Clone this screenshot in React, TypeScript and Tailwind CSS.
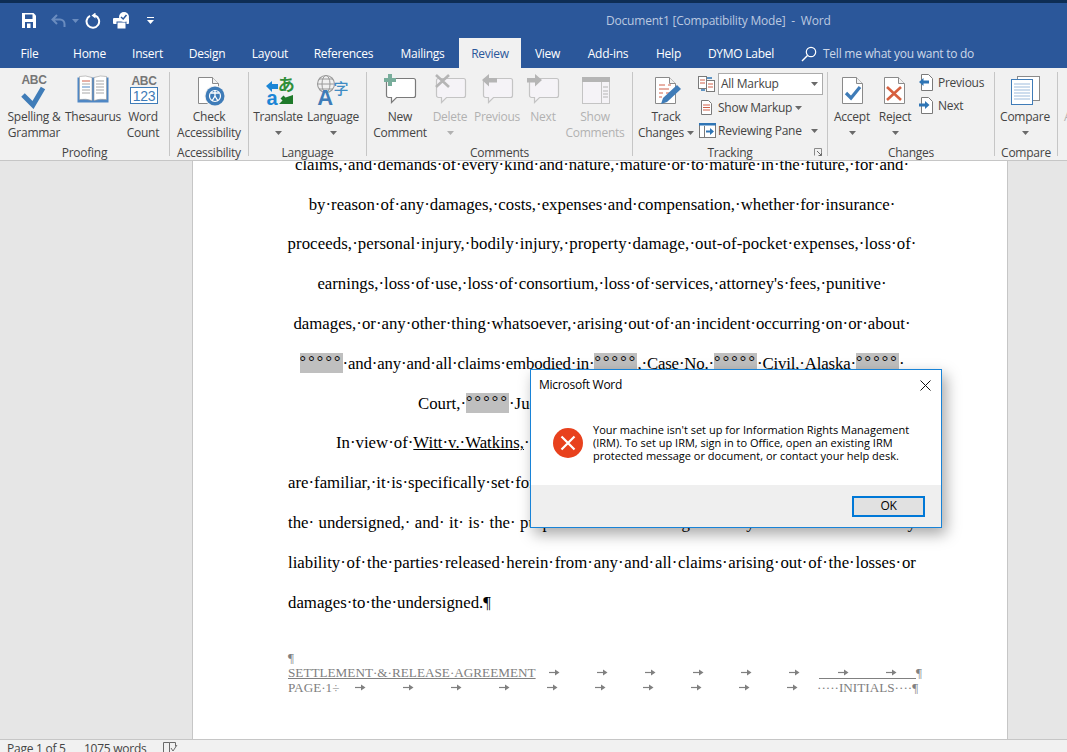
import React from "react";

const Caret = ({ color = "#6a6a6a" }: { color?: string }) => (
  <svg width="7" height="4" viewBox="0 0 7 4" className="shrink-0"><polygon points="0,0 7,0 3.5,4" fill={color} /></svg>
);

const Ico = ({ children, w = 40 }: { children: React.ReactNode; w?: number }) => (
  <svg width={w} height="37" viewBox={`0 0 ${w} 37`} className="shrink-0 block">{children}</svg>
);

const Bubble = ({ stroke, fill, children }: { stroke: string; fill: string; children?: React.ReactNode }) => (
  <Ico>
    <path d="M8.5 6.5h25a2 2 0 0 1 2 2v15a2 2 0 0 1-2 2h-17l-5 5v-5h-3a2 2 0 0 1-2-2v-15a2 2 0 0 1 2-2z" fill={fill} stroke={stroke} strokeWidth="1.2" />
    {children}
  </Ico>
);

const PageIco = ({ children, x = 10, stroke = "#8a8a8a" }: { children?: React.ReactNode; x?: number; stroke?: string }) => (
  <Ico>
    <path d={`M${x + 0.5} 5.5h14l6 6v20h-20z`} fill="#fff" stroke={stroke} />
    <path d={`M${x + 14.5} 5.5v6h6`} fill="#f1f1f1" stroke={stroke} />
    {children}
  </Ico>
);

const SmallPage = ({ dir }: { dir: "l" | "r" }) => (
  <svg width="14" height="17" viewBox="0 0 14 17" className="shrink-0">
    <path d="M2.5 .5h7l4 4v12h-11z" fill="#fff" stroke="#7a7a7a" />
    {dir === "l" ? (
      <path d="M0 8l4.5-4v2.5h5.5v3h-5.5v2.500z" fill="#2f75b5" />
    ) : (
      <path d="M10.500 8l-4.500-4v2.500h-6v3h6v2.500z" fill="#2f75b5" />
    )}
  </svg>
);

const RBtn = ({ w, icon, l1, l2, caret, off }: { w: string; icon: React.ReactNode; l1: string; l2?: string; caret?: boolean; off?: boolean }) => (
  <div className={`flex flex-col items-center shrink-0 ${w} ${off ? "text-[#b1b1b1]" : "text-[#444444]"}`}>
    <div className="h-[37px] mt-[4px] flex justify-center">{icon}</div>
    <div className="h-[16px] leading-[16px] whitespace-nowrap">{l1}</div>
    {l2 ? <div className="h-[16px] leading-[16px] whitespace-nowrap">{l2}</div> : null}
    {caret ? <div className="h-[16px] flex items-center"><Caret color={off ? "#b1b1b1" : "#6a6a6a"} /></div> : null}
  </div>
);

const Sep = () => <div className="w-px shrink-0 my-[4px] bg-[#c6c6c6]" />;

const Group = ({ w, pad, label, children }: { w: string; pad?: string; label: string; children: React.ReactNode }) => (
  <div className={`relative flex flex-col shrink-0 ${w}`}>
    <div className={`flex h-[76px] mb-px ${pad ?? ""}`}>{children}</div>
    <div className="h-[15px] leading-[15px] text-center text-[#444444] whitespace-nowrap">{label}</div>
  </div>
);

const tabs: { t: string; w: string }[] = [
  { t: "File", w: "w-[59px]" },
  { t: "Home", w: "w-[61px]" },
  { t: "Insert", w: "w-[55px]" },
  { t: "Design", w: "w-[64px]" },
  { t: "Layout", w: "w-[62px]" },
  { t: "References", w: "w-[85px]" },
  { t: "Mailings", w: "w-[73px]" },
  { t: "Review", w: "w-[62px]" },
  { t: "View", w: "w-[53px]" },
  { t: "Add-ins", w: "w-[68px]" },
  { t: "Help", w: "w-[53px]" },
  { t: "DYMO Label", w: "w-[92px]" },
];

const Hl = () => (
  <span className="inline-block w-[43px] h-[20px] leading-[18px] bg-[#bfbfbf] text-center tracking-[2.2px] text-[16px] align-[-4px] whitespace-nowrap overflow-hidden">°°°°°</span>
);

const Line = ({ children, cls = "justify-center" }: { children: React.ReactNode; cls?: string }) => (
  <div className={`h-[39.82px] flex items-center whitespace-pre ${cls}`}>{children}</div>
);

const Just = ({ words }: { words: string[] }) => (
  <Line cls="justify-between">
    {words.map((w, i) => (
      <span key={i}>{i < words.length - 1 ? `${w}·` : w}</span>
    ))}
  </Line>
);

const Arrow = ({ w = "w-[48px]" }: { w?: string }) => (
  <span className={`inline-flex items-center justify-center shrink-0 h-[15px] ${w}`}>
    <svg width="11" height="7" viewBox="0 0 11 7"><path d="M0 3.500h7" stroke="#808080" strokeWidth="1.200" /><path d="M6 .5l4.500 3-4.500 3z" fill="#808080" /></svg>
  </span>
);

export default function App() {
  return (
    <div className="relative w-[1067px] h-[752px] overflow-hidden flex flex-col bg-[#e6e6e6] font-['Open_Sans',sans-serif] text-[12px] tracking-[-0.25px]">
      {/* title */}
      <div className="h-[3px] shrink-0 bg-[#0e2d54]" />
      <div className="h-[35px] shrink-0 bg-[#2b579a] flex items-center relative">
        <div className="flex items-center pl-[22px]">
          <svg width="14" height="15" viewBox="0 0 14 15" className="shrink-0">
            <path d="M0 0h11.500l2.500 2.500v12.500h-14z" fill="#fff" />
            <rect x="3" y="1.500" width="7.500" height="4.500" fill="#2b579a" />
            <rect x="3" y="9" width="8" height="6" fill="#2b579a" />
            <rect x="5" y="10.500" width="3.500" height="4.500" fill="#fff" />
          </svg>
          <svg width="16" height="14" viewBox="0 0 16 14" className="ml-[15px] shrink-0">
            <path d="M6 1L1.500 5.500 6 10M2 5.500h7a4.500 4.500 0 0 1 4.500 4.500v3" fill="none" stroke="#6a8cbf" strokeWidth="2" />
          </svg>
          <div className="ml-[5px]"><Caret color="#6a8cbf" /></div>
          <svg width="16" height="16" viewBox="0 0 16 16" className="ml-[6px] shrink-0">
            <path d="M5 2.800A6.300 6.300 0 1 0 10 2.500" fill="none" stroke="#fff" strokeWidth="2" />
            <path d="M9.500 0v6l-4-3z" fill="#fff" transform="translate(1 -.5)" />
          </svg>
          <svg width="17" height="17" viewBox="0 0 17 17" className="ml-[12px] shrink-0">
            <rect x="0" y="6" width="16" height="6" rx="1" fill="#fff" />
            <rect x="4" y="10" width="9" height="7" fill="#fff" stroke="#2b579a" />
            <circle cx="11" cy="5" r="5" fill="#fff" />
            <path d="M8 5l2.200 2 3.300-4" fill="none" stroke="#2b579a" strokeWidth="1.500" />
          </svg>
          <svg width="7" height="7" viewBox="0 0 7 7" className="ml-[17px] shrink-0">
            <rect x="0" y="0" width="7" height="1" fill="#fff" />
            <polygon points="0,3 7,3 3.500,7" fill="#fff" />
          </svg>
        </div>
        <div className="absolute left-[606px] top-[10px] whitespace-nowrap text-[#bcc9e0] leading-[16px] tracking-[-0.2px]">Document1 [Compatibility Mode]&nbsp; -&nbsp; Word</div>
      </div>
      {/* tabs */}
      <div className="h-[30px] shrink-0 bg-[#2b579a] flex items-stretch">
        {tabs.map((t) =>
          t.t === "Review" ? (
            <div key={t.t} className={`${t.w} shrink-0 bg-[#f1f1f1] text-[#2b579a] flex items-center justify-center pt-[2px]`}>{t.t}</div>
          ) : (
            <div key={t.t} className={`${t.w} shrink-0 text-white flex items-center justify-center whitespace-nowrap pt-[2px]`}>{t.t}</div>
          )
        )}
        <div className="flex items-center ml-[14px] pt-[2px]">
          <svg width="16" height="16" viewBox="0 0 16 16" className="shrink-0">
            <circle cx="10" cy="6" r="4.700" fill="none" stroke="#fff" strokeWidth="1.200" />
            <path d="M6.500 9.500L1 15" stroke="#fff" strokeWidth="1.400" />
          </svg>
          <span className="ml-[6px] text-[#cdd7e8] whitespace-nowrap">Tell me what you want to do</span>
        </div>
      </div>
      {/* ribbon */}
      <div className="h-[93px] shrink-0 bg-[#f1f1f1] border-b border-[#c6c6c6] flex">
        <Group w="w-[169px]" pad="pl-[5px]" label="Proofing">
          <RBtn w="w-[58px]" l1="Spelling &" l2="Grammar" icon={
            <Ico>
              <text x="20" y="12" textAnchor="middle" fontFamily="Liberation Sans" fontWeight="700" fontSize="12" fill="#767676">ABC</text>
              <path d="M9 23l10 10L29 16" fill="none" stroke="#3f7cb8" strokeWidth="5" />
            </Ico>
          } />
          <RBtn w="w-[60px]" l1="Thesaurus" icon={
            <Ico>
              <path d="M4.500 5.500h31v25h-31z" fill="#4f87c4" />
              <path d="M6.500 4.500q6-1.500 12.500 1v23q-6-2-12.500-1zM33.500 4.500q-6-1.500-12.500 1v23q6-2 12.500-1z" fill="#fff" stroke="#9a9a9a" strokeWidth=".6" />
              <path d="M9 9h8" stroke="#d0604a" />
              <path d="M9 12h8M9 18h8M23 9h8M23 12h8M23 15h8M23 18h8M23 21h8M9 21h8" stroke="#a8a8a8" />
              <path d="M9 15h8" stroke="#4f87c4" />
            </Ico>
          } />
          <RBtn w="w-[40px]" l1="Word" l2="Count" icon={
            <Ico>
              <text x="21" y="13" textAnchor="middle" fontFamily="Liberation Sans" fontWeight="700" fontSize="12" fill="#767676">ABC</text>
              <rect x="7.500" y="15.500" width="27" height="16" fill="#fff" stroke="#3f7cb8" />
              <text x="21" y="29" textAnchor="middle" fontFamily="Liberation Sans" fontSize="14" fill="#3f7cb8">123</text>
            </Ico>
          } />
        </Group>
        <Sep />
        <Group w="w-[78px]" label="Accessibility">
          <RBtn w="w-[78px]" l1="Check" l2="Accessibility" icon={
            <PageIco x={9}>
              <circle cx="26" cy="24" r="10.500" fill="#f1f1f1" />
              <circle cx="26" cy="24" r="9.500" fill="#3f7cb8" />
              <circle cx="26" cy="24" r="5.500" fill="none" stroke="#fff" strokeWidth="1.200" />
              <path d="M26 18v6M22 21h8M26 24l-3 5M26 24l3 5" stroke="#fff" strokeWidth="1.300" />
            </PageIco>
          } />
        </Group>
        <Sep />
        <Group w="w-[117px]" pad="pl-[2px]" label="Language">
          <RBtn w="w-[54px]" l1="Translate" caret icon={
            <Ico>
              <text x="28" y="19" textAnchor="middle" fontFamily="Noto Sans CJK JP" fontWeight="700" fontSize="17" fill="#2f8f3a">あ</text>
              <text x="14" y="33" textAnchor="middle" fontFamily="Liberation Sans" fontWeight="700" fontSize="20" fill="#1c86d6">a</text>
              <path d="M8 14l6-5v3h6v5h-6v3z" fill="#1c86d6" />
              <path d="M35 23v9H21l3.500-3.500-2-2 3-3 2 2z" fill="#1f7a2a" />
            </Ico>
          } />
          <RBtn w="w-[56px]" l1="Language" caret icon={
            <Ico>
              <circle cx="13" cy="12" r="8.500" fill="none" stroke="#9a9a9a" strokeWidth="1.100" />
              <ellipse cx="13" cy="12" rx="4" ry="8.500" fill="none" stroke="#9a9a9a" />
              <path d="M4.500 12h17M6 7h14M6 17h14" stroke="#9a9a9a" />
              <text x="12" y="33" textAnchor="middle" fontFamily="Liberation Sans" fontWeight="700" fontSize="22" fill="#3f7cb8">A</text>
              <text x="28" y="22" textAnchor="middle" fontFamily="Noto Sans CJK SC" fontWeight="500" fontSize="15" fill="#3f8cc4">字</text>
            </Ico>
          } />
        </Group>
        <Sep />
        <Group w="w-[265px]" pad="pl-[6px]" label="Comments">
          <RBtn w="w-[54px]" l1="New" l2="Comment" icon={
            <Bubble stroke="#7a7a7a" fill="#fff">
              <path d="M8 2h4v4h4v4h-4v4H8v-4H4V6h4z" fill="#78ad9b" />
            </Bubble>
          } />
          <RBtn w="w-[46px]" off l1="Delete" caret icon={
            <Bubble stroke="#c4c4c4" fill="#f5f3f7">
              <path d="M6 3l13 12M19 3L6 15" stroke="#b5b5b5" strokeWidth="2.600" />
            </Bubble>
          } />
          <RBtn w="w-[48px]" off l1="Previous" icon={
            <Bubble stroke="#c4c4c4" fill="#f5f3f7">
              <path d="M5 8l7-6v4h8v4.500h-8v4z" fill="#b5b5b5" />
            </Bubble>
          } />
          <RBtn w="w-[44px]" off l1="Next" icon={
            <Bubble stroke="#c4c4c4" fill="#f5f3f7">
              <path d="M19 8l-7-6v4H4v4.500h8v4z" fill="#b5b5b5" />
            </Bubble>
          } />
          <RBtn w="w-[60px]" off l1="Show" l2="Comments" icon={
            <Ico>
              <rect x="7.500" y="5.500" width="27" height="26" fill="#f5f3f7" stroke="#c4c4c4" />
              <rect x="7" y="5" width="28" height="5" fill="#b5b5b5" />
              <path d="M26.500 10v21" stroke="#c4c4c4" />
              <path d="M28 15h5M28 19h5M28 22h5M28 25h5" stroke="#b5b5b5" />
            </Ico>
          } />
        </Group>
        <Sep />
        <Group w="w-[194px]" pad="pl-[4px]" label="Tracking">
          <div className="flex flex-col items-center shrink-0 w-[58px] text-[#444444]">
            <div className="h-[37px] mt-[4px]">
              <PageIco x={9}>
                <path d="M13 13h6M22 13h3M13 17h10M13 21h4M20 21h6M13 25h3" stroke="#d0604a" strokeWidth="1" />
                <path d="M15 32l2-6 14-13 4 4-14 13z" fill="#3f7cb8" />
              </PageIco>
            </div>
            <div className="h-[16px] leading-[16px]">Track</div>
            <div className="h-[16px] leading-[16px] flex items-center gap-[3px] whitespace-nowrap">Changes<Caret /></div>
          </div>
          <div className="flex flex-col pl-[3px] text-[#444444] whitespace-nowrap">
            <div className="flex items-center h-[25px] mt-[3px]">
              <svg width="17" height="17" viewBox="0 0 17 17" className="shrink-0">
                <rect x=".5" y="1.500" width="8" height="12" fill="#fff" stroke="#7a7a7a" />
                <rect x="8.500" y="5.500" width="8" height="11" fill="#fff" stroke="#7a7a7a" />
                <path d="M2 5h5M2 8h5M10 9h5M10 12h5" stroke="#d0604a" />
                <path d="M9 3h5M3 15h4" stroke="#2f75b5" strokeWidth="1.600" />
              </svg>
              <div className="ml-[3px] w-[105px] h-[22px] bg-white border border-[#ababab] flex items-center justify-between pl-[2px] pr-[4px]">
                <span>All Markup</span><Caret />
              </div>
            </div>
            <div className="flex items-center h-[23px]">
              <div className="w-[20px] pl-[3px] shrink-0">
                <svg width="11" height="15" viewBox="0 0 11 15" className="block"><path d="M.5.5h7l3 3v11H.5z" fill="#fff" stroke="#7a7a7a" /><path d="M2 5h7M2 7.500h7M2 10h7" stroke="#d0604a" /></svg>
              </div>
              <span>Show Markup</span><span className="ml-[3px]"><Caret /></span>
            </div>
            <div className="flex items-center h-[23px]">
              <div className="w-[20px] pl-px shrink-0">
                <svg width="17" height="15" viewBox="0 0 17 15" className="block"><rect x=".5" y=".5" width="16" height="14" fill="#fff" stroke="#7a7a7a" /><rect width="17" height="2.500" fill="#2f75b5" /><path d="M5.500 3v11" stroke="#7a7a7a" /><path d="M7 7.500h4v-2.500l4 3.500-4 3.500v-2.500H7z" fill="#2f75b5" /></svg>
              </div>
              <span>Reviewing Pane</span><span className="ml-[9px]"><Caret /></span>
            </div>
          </div>
          <svg width="8" height="8" viewBox="0 0 8 8" className="absolute right-[5px] bottom-[4px]">
            <path d="M.5 7.500V.5h7v4" fill="none" stroke="#8a8a8a" /><path d="M3 3l4.500 4.500M7.500 4.500v3h-3" fill="none" stroke="#6a6a6a" />
          </svg>
        </Group>
        <Sep />
        <Group w="w-[166px]" pad="pl-[2px]" label="Changes">
          <RBtn w="w-[44px]" l1="Accept" caret icon={
            <PageIco x={10}><path d="M14 21l5 5 9-11" fill="none" stroke="#3f7cb8" strokeWidth="3.200" /></PageIco>
          } />
          <RBtn w="w-[42px]" l1="Reject" caret icon={
            <PageIco x={9}><path d="M12 15l14 13M26 15L12 28" stroke="#d6603f" strokeWidth="2.600" /></PageIco>
          } />
          <div className="flex flex-col pl-[3px] text-[#444444] whitespace-nowrap">
            <div className="flex items-center h-[23px] mt-[3px] gap-[5px]"><SmallPage dir="l" /><span>Previous</span></div>
            <div className="flex items-center h-[23px] gap-[5px]"><SmallPage dir="r" /><span>Next</span></div>
          </div>
        </Group>
        <Sep />
        <Group w="w-[62px]" label="Compare">
          <RBtn w="w-[60px]" l1="Compare" caret icon={
            <Ico>
              <rect x="12.500" y="4.500" width="22" height="24" fill="#fff" stroke="#8a8a8a" />
              <rect x="6.500" y="7.500" width="21" height="25" fill="#fff" stroke="#3f7cb8" />
              <path d="M9 12h16M9 15h16M9 18h16M9 21h16M9 24h16M9 27h16" stroke="#9dbbdc" />
            </Ico>
          } />
        </Group>
        <Sep />
        <div className="pl-[6px] pt-[41px] text-[#b1b1b1] leading-[16px]">A</div>
      </div>
      {/* document */}
      <div className="flex-1 min-h-0 flex pl-[192px] pr-[59px] overflow-hidden">
        <div className="w-[816px] shrink-0 bg-white border-x border-[#c6c6c6] overflow-hidden pl-[95px] pr-[91px] font-['Liberation_Serif',serif] text-[16.8px] tracking-normal text-black">
          <div className="mt-[-16.6px]">
            <Line><span className="tracking-[-0.07px]">claims,·and·demands·of·every·kind·and·nature,·mature·or·to·mature·in·the·future,·for·and·</span></Line>
            <Line>by·reason·of·any·damages,·costs,·expenses·and·compensation,·whether·for·insurance·</Line>
            <Line><span className="tracking-[0.09px]">proceeds,·personal·injury,·bodily·injury,·property·damage,·out-of-pocket·expenses,·loss·of·</span></Line>
            <Line>earnings,·loss·of·use,·loss·of·consortium,·loss·of·services,·attorney's·fees,·punitive·</Line>
            <Line>damages,·or·any·other·thing·whatsoever,·arising·out·of·an·incident·occurring·on·or·about·</Line>
            <Line><span className="tracking-[-0.15px]"><Hl />·and·any·and·all·claims·embodied·in·<Hl />,·Case·No.·<Hl />·Civil,·Alaska·<Hl />·</span></Line>
            <Line cls="justify-start pl-[130px]"><span>Court,·<Hl />·Judicial·District,·State·of·Alaska.·</span></Line>
            <Line cls="justify-start pl-[48px]"><span>In·view·of·<span className="underline">Witt·v.·Watkins,</span>·579·P.2d·1065·(Alaska)</span></Line>
            <Line cls="justify-start">are·familiar,·it·is·specifically·set·forth·herein·that</Line>
            <Just words={["the", "undersigned,", "and", "it", "is", "the", "purpose", "of", "this", "writing", "to", "fully", "and", "forever", "end", "any"]} />
            <Just words={["liability", "of", "the", "parties", "released", "herein", "from", "any", "and", "all", "claims", "arising", "out", "of", "the", "losses", "or"]} />
            <Line cls="justify-start">damages·to·the·undersigned.¶</Line>
            <div className="mt-[27.6px] text-[13.2px] leading-[15px] text-[#808080] whitespace-pre">
              <div className="h-[15px]">¶</div>
              <div className="h-[15px] flex">
                <span className="underline w-[242px] shrink-0">SETTLEMENT·&·RELEASE·AGREEMENT</span>
                <Arrow /><Arrow /><Arrow /><Arrow /><Arrow /><Arrow />
                <span className="flex border-b border-[#808080] h-[14px] w-[97px] shrink-0 ml-[1px]"><Arrow /><Arrow /></span>
                <span>¶</span>
              </div>
              <div className="h-[15px] flex">
                <span className="w-[48px] shrink-0">PAGE·1÷</span>
                <Arrow /><Arrow /><Arrow /><Arrow /><Arrow /><Arrow /><Arrow /><Arrow /><Arrow /><Arrow />
                <span className="ml-[1px]">·····INITIALS····¶</span>
              </div>
            </div>
          </div>
        </div>
      </div>
      {/* status */}
      <div className="h-[13px] shrink-0 bg-[#f1f1f1] border-t border-[#c6c6c6] flex text-[#444444] overflow-hidden">
        <span className="ml-[7px] w-[77px] shrink-0 leading-[16px] mt-[1px] whitespace-nowrap">Page 1 of 5</span>
        <span className="w-[79px] shrink-0 leading-[16px] mt-[1px] whitespace-nowrap">1075 words</span>
        <svg width="15" height="13" viewBox="0 0 15 13" className="mt-[2px] shrink-0">
          <path d="M.5 12V.5h6v12M6.500.5h6v4M8 6l2 3 4-6" fill="none" stroke="#6a6a6a" />
        </svg>
      </div>
      {/* dialog */}
      <div className="absolute left-[530px] top-[369px] w-[412px] h-[159px] bg-white border border-[#1883d7] shadow-[4px_6px_14px_rgba(0,0,0,0.35)] flex flex-col text-black">
        <div className="h-[30px] shrink-0 flex items-center justify-between pl-[8px] pr-[10px]">
          <span>Microsoft Word</span>
          <svg width="11" height="11" viewBox="0 0 11 11"><path d="M.5.5l10 10M10.500.5l-10 10" stroke="#111" strokeWidth="1" /></svg>
        </div>
        <div className="flex-1 flex items-center pl-[22px]">
          <svg width="30" height="30" viewBox="0 0 30 30" className="shrink-0">
            <circle cx="15" cy="15" r="15" fill="#e8411d" />
            <path d="M8.500 8.500l13 13M21.500 8.500l-13 13" stroke="#fff" strokeWidth="2.200" />
          </svg>
          <div className="ml-[10px] text-[11px] leading-[13px] tracking-normal whitespace-nowrap text-black">
            <div>Your machine isn't set up for Information Rights Management</div>
            <div>(IRM). To set up IRM, sign in to Office, open an existing IRM</div>
            <div>protected message or document, or contact your help desk.</div>
          </div>
        </div>
        <div className="h-[42px] shrink-0 bg-[#efefef] flex items-center justify-end pr-[16px]">
          <div className="w-[73px] h-[21px] bg-[#e1e1e1] border-2 border-[#0078d7] flex items-center justify-center">OK</div>
        </div>
      </div>
    </div>
  );
}
